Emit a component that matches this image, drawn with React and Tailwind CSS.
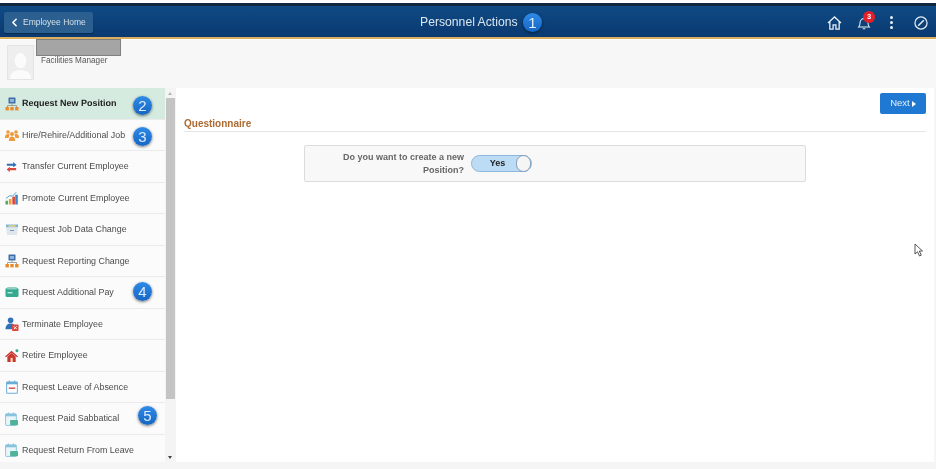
import React from "react";
import { ChevronLeft } from "lucide-react";

const font = { fontFamily: '"Liberation Sans", Arial, sans-serif' };

/* ---------- menu icons ---------- */
const OrgIcon = () => (
  <svg width="14" height="14" viewBox="0 0 14 14">
    <rect x="3.5" y="0.5" width="7" height="6" rx="0.5" fill="#3f6fa8" />
    <rect x="5" y="2" width="4" height="3" fill="#8fb4dc" />
    <path d="M7 6.5v2M2.5 10V8.5h9V10" stroke="#8a8a8a" strokeWidth="0.8" fill="none" />
    <rect x="0.5" y="10" width="3.4" height="3.4" fill="#e88a2a" />
    <rect x="5.3" y="10" width="3.4" height="3.4" fill="#e88a2a" />
    <rect x="10.1" y="10" width="3.4" height="3.4" fill="#e88a2a" />
  </svg>
);

const PeopleIcon = () => (
  <svg width="14" height="12" viewBox="0 0 14 12" fill="#ee9a3c">
    <circle cx="3" cy="3" r="1.8" />
    <circle cx="11" cy="3" r="1.8" />
    <circle cx="7" cy="5" r="2" />
    <path d="M0 8c0-2 1.2-3 3-3 1 0 1.5.4 1.5.4L3.6 9H0zM14 8c0-2-1.2-3-3-3-1 0-1.5.4-1.5.4L10.4 9H14zM3.8 12c0-3 1.3-4.5 3.2-4.5S10.2 9 10.2 12z" />
  </svg>
);

const TransferIcon = () => (
  <svg width="11" height="14" viewBox="0 0 13 14">
    <path d="M1 3.2h7.5V1L12.5 4.5 8.500 7.200V5.600H1z" fill="#2f6fb5" />
    <path d="M12 8.200H4.500V6.800L.8 10l3.700 3v-2.200H12z" fill="#d9483b" />
  </svg>
);

const ChartIcon = () => (
  <svg width="13" height="14" viewBox="0 0 14 14">
    <rect x="0.5" y="10" width="2.8" height="4" fill="#55a868" />
    <rect x="4.2" y="8" width="2.8" height="6" fill="#e8a33a" />
    <rect x="7.9" y="5.5" width="2.8" height="8.5" fill="#d9483b" />
    <rect x="11" y="3.5" width="2.8" height="10.5" fill="#3f86c6" />
    <path d="M1 7.5 5 4.500 8 5 12 .8" stroke="#4a9cc9" strokeWidth="1" fill="none" />
  </svg>
);

const JobDataIcon = () => (
  <svg width="14" height="13" viewBox="0 0 14 13">
    <path d="M1 1.500h12v3H1z" fill="#7bb6d9" />
    <path d="M1 4.500h12l-1 7.500H2z" fill="#dfe7ee" />
    <rect x="3.500" y="2.200" width="7" height="1.600" fill="#e8d27a" />
    <rect x="5" y="7" width="4" height="1" fill="#7f93a6" />
  </svg>
);

const PayIcon = () => (
  <svg width="14" height="11" viewBox="0 0 14 11">
    <rect x="0.5" y="1" width="13" height="9" rx="1.500" fill="#35a98f" />
    <rect x="2" y="0" width="10" height="2.400" rx="1" fill="#8fd0c0" />
    <rect x="2.500" y="5" width="5" height="1.400" fill="#bfe8dd" />
  </svg>
);

const TerminateIcon = () => (
  <svg width="14" height="14" viewBox="0 0 15 15">
    <circle cx="6" cy="3.500" r="3" fill="#2f72b8" />
    <path d="M0.500 13c0-4 2.400-6 5.500-6s5.500 2 5.500 6z" fill="#2f72b8" />
    <rect x="7.500" y="8" width="7" height="7" rx="0.800" fill="#dc4a3e" />
    <path d="M9.500 10l3 3M12.500 10l-3 3" stroke="#fff" strokeWidth="1" />
  </svg>
);

const RetireIcon = () => (
  <svg width="14" height="13" viewBox="0 0 15 14">
    <path d="M0 8 7 2l7 6-1 1-6-5-6 5z" fill="#c8372d" />
    <path d="M2.500 8 7 4.300 11.500 8v6h-9z" fill="#c8372d" />
    <rect x="6" y="9.500" width="2.200" height="4.500" fill="#f3e0d0" />
    <circle cx="12.800" cy="2" r="1.600" fill="#35a98f" />
  </svg>
);

const LeaveIcon = () => (
  <svg width="12" height="14" viewBox="0 0 13 15">
    <rect x="0.700" y="2" width="11.600" height="12.300" rx="0.800" fill="#fff" stroke="#6aaed6" strokeWidth="1.100" />
    <rect x="0.700" y="2" width="11.600" height="2.600" fill="#6aaed6" />
    <rect x="3" y="0.500" width="1.200" height="3" fill="#6aaed6" />
    <rect x="8.800" y="0.500" width="1.200" height="3" fill="#6aaed6" />
    <rect x="3" y="8" width="7" height="1.600" fill="#d9574b" />
  </svg>
);

const CalendarPayIcon = () => (
  <svg width="13" height="14" viewBox="0 0 14 15">
    <rect x="0.600" y="2" width="11.600" height="12.400" rx="0.800" fill="#eaf5f9" stroke="#86c4de" strokeWidth="1" />
    <rect x="0.600" y="2" width="11.600" height="2.600" fill="#86c4de" />
    <rect x="3" y="0.500" width="1.200" height="3" fill="#86c4de" />
    <rect x="8.600" y="0.500" width="1.200" height="3" fill="#86c4de" />
    <rect x="5.500" y="8.500" width="8.500" height="5.800" rx="0.800" fill="#4fb39c" />
  </svg>
);

const menuItems = [
  { label: "Request New Position", icon: OrgIcon, active: true },
  { label: "Hire/Rehire/Additional Job", icon: PeopleIcon },
  { label: "Transfer Current Employee", icon: TransferIcon },
  { label: "Promote Current Employee", icon: ChartIcon },
  { label: "Request Job Data Change", icon: JobDataIcon },
  { label: "Request Reporting Change", icon: OrgIcon },
  { label: "Request Additional Pay", icon: PayIcon },
  { label: "Terminate Employee", icon: TerminateIcon },
  { label: "Retire Employee", icon: RetireIcon },
  { label: "Request Leave of Absence", icon: LeaveIcon },
  { label: "Request Paid Sabbatical", icon: CalendarPayIcon },
  { label: "Request Return From Leave", icon: CalendarPayIcon },
];

// Numbered callouts drawn over the video frame
const Callout = ({ n, className }) => (
  <div
    className={`absolute w-[19px] h-[19px] rounded-full bg-gradient-to-b from-[#2f8ae6] to-[#1566c4] text-[#dcecfb] text-[15px] leading-[19px] text-center shadow-[0_1px_3px_rgba(0,0,0,0.55)] ${className}`}
  >
    {n}
  </div>
);

const Header = () => (
  <div className="relative h-[40px] pt-[3px] bg-white shrink-0">
    <div className="relative flex items-center justify-between h-[36px] pt-[2px] border-t-[3px] border-[#10263f] border-b-2 border-b-[#dcae5e] bg-gradient-to-b from-[#0f4a85] to-[#0a3a70] pl-[4px] pr-[8px]">
      <div className="flex items-center h-[21px] w-[89px] rounded-[2px] bg-[#2a5f8f] text-[#d5e0ea] text-[8.500px] shadow-[0_1px_1px_rgba(0,0,0,0.3)]">
        <ChevronLeft size={13} strokeWidth={3} className="ml-[4px] mr-[2px] text-white" />
        Employee Home
      </div>
      <div className="absolute left-[420px] top-[7px] text-[12.200px] leading-[18px] text-[#dbe6f0]">Personnel Actions</div>
      <div className="flex items-center">
        <svg width="15" height="14" viewBox="0 0 16 15" fill="none" stroke="#e8eff5" strokeWidth="1.400">
          <path d="M1 7.500 8 1l7 6.500M3 6v8h3.500V9.500h3V14H13V6" />
        </svg>
        <div className="relative ml-[15px] w-[18px] h-[16px]">
          <svg className="mt-[1px]" width="14" height="14" viewBox="0 0 16 16" fill="none" stroke="#e8eff5" strokeWidth="1.200">
            <path d="M2 12.500c1.500-1.500 1.500-3 1.500-5C3.500 5 5.500 3 8 3s4.500 2 4.500 4.500c0 2 0 3.500 1.500 5zM6.500 14.500h3" />
          </svg>
          <div className="absolute left-[6px] top-[-4px] w-[12px] h-[12px] rounded-full bg-[#e3202a] text-white text-[7.500px] leading-[12px] text-center font-bold">3</div>
        </div>
        <div className="ml-[15px] flex flex-col gap-[2px]">
          <span className="w-[3px] h-[3px] rounded-full bg-[#e8eff5]" />
          <span className="w-[3px] h-[3px] rounded-full bg-[#e8eff5]" />
          <span className="w-[3px] h-[3px] rounded-full bg-[#e8eff5]" />
        </div>
        <svg className="ml-[21px]" width="14" height="14" viewBox="0 0 15 15" fill="none" stroke="#e8eff5" strokeWidth="1.300">
          <circle cx="7.500" cy="7.500" r="6.500" />
          <path d="M4.500 10.500 10.500 4.500" strokeWidth="1.600" />
        </svg>
      </div>
    </div>
  </div>
);

const Profile = () => (
  <div className="relative flex h-[48px] shrink-0 bg-[#f7f7f7] pl-[7px] pt-[5px]">
    <div className="flex items-end justify-center w-[27px] h-[35px] bg-[#eeeeee] border border-[#e4e4e4] overflow-hidden">
      <svg width="23" height="28" viewBox="0 0 24 29" fill="#fbfbfb">
        <ellipse cx="12" cy="10" rx="6" ry="8" />
        <path d="M1 29c0-7 5-9 11-9s11 2 11 9z" />
      </svg>
    </div>
    <div className="ml-[7px] mt-[10px] text-[8.200px] leading-[12px] text-[#555]">Facilities Manager</div>
    <div className="absolute left-[36px] top-[-1px] w-[85px] h-[17px] bg-[#a5a5a5] border border-[#808080]" />
  </div>
);

const Sidebar = () => (
  <div className="relative flex w-[176px] shrink-0 bg-[#fbfbfb] overflow-hidden">
    <div className="w-[165px] shrink-0">
      {menuItems.map((item) => {
        const Icon = item.icon;
        return (
          <div
            key={item.label}
            className={`flex items-center h-[31.500px] pt-px border-b border-[#ebebeb] ${
              item.active ? "bg-[#d6ebdf] font-bold text-[9px] [text-rendering:geometricPrecision] text-[#1c1c1c]" : "text-[8.900px] text-[#4c4c4c]"
            }`}
          >
            <span className="flex justify-center w-[22px] shrink-0 pl-px">
              <Icon />
            </span>
            {item.label}
          </div>
        );
      })}
    </div>
    <div className="relative w-[11px] shrink-0 bg-[#f4f4f4]">
      <div className="mx-[1px] mt-[10px] h-[301px] w-[9px] bg-[#c4c4c4]" />
      <div className="absolute left-[3px] top-[4px] border-x-[2.500px] border-x-transparent border-b-[3px] border-b-[#b5b5b5]" />
      <div className="absolute left-[3px] bottom-[3px] border-x-[2.500px] border-x-transparent border-t-[3px] border-t-[#444]" />
    </div>
  </div>
);

const Content = () => (
  <div className="relative flex-1 min-w-0 bg-white pl-[8px] pr-[8px] pt-[5px]">
    <div className="flex justify-end">
      <div className="flex items-center justify-center gap-[2px] w-[46px] h-[21px] rounded-[2px] bg-[#1f78d1] text-[#e6f0fa] text-[9.500px]">
        Next
        <span className="border-y-[3.500px] border-y-transparent border-l-[4px] border-l-white" />
      </div>
    </div>
    <div className="mt-[3px] border-b border-[#e6e6e6] text-[10px] leading-[14px] font-bold text-[#ad6a32]">Questionnaire</div>
    <div className="flex items-center ml-[120px] mt-[13px] w-[502px] h-[37px] rounded-[2px] border border-[#dcdcdc] bg-[#f8f8f8]">
      <div className="w-[159px] shrink-0 text-right text-[9px] leading-[13px] font-bold text-[#666]">
        Do you want to create a new Position?
      </div>
      <div className="relative ml-[7px] w-[61px] h-[17px] rounded-full bg-[#bcdcf5] border border-[#8fb7dc] text-center text-[9px] leading-[15px] font-bold text-[#222] pr-[8px]">
        Yes
        <span className="absolute right-0 top-[-1px] w-[15px] h-[17px] rounded-full bg-[#f5f5f5] border border-[#7f9ab8]" />
      </div>
    </div>
    {/* mouse pointer from the recording */}
    <svg className="absolute left-[738px] top-[155px]" width="10" height="14" viewBox="0 0 10 14" fill="#fff" stroke="#444" strokeWidth="0.900">
      <path d="M1 1v10l2.500-2.200L5.500 13l1.800-.8-2-4.200H8.500z" />
    </svg>
  </div>
);

export default function App() {
  return (
    <div className="relative flex flex-col w-[936px] h-[469px] overflow-hidden bg-[#f5f5f5] blur-[0.4px]" style={font}>
      <Header />
      <Profile />
      <div className="flex h-[374px] shrink-0 pr-[2px]">
        <Sidebar />
        <Content />
      </div>
      <Callout n={1} className="left-[523px] top-[13px]" />
      <Callout n={2} className="left-[133px] top-[96px]" />
      <Callout n={3} className="left-[133px] top-[127px]" />
      <Callout n={4} className="left-[133px] top-[282px]" />
      <Callout n={5} className="left-[138px] top-[406px]" />
    </div>
  );
}
